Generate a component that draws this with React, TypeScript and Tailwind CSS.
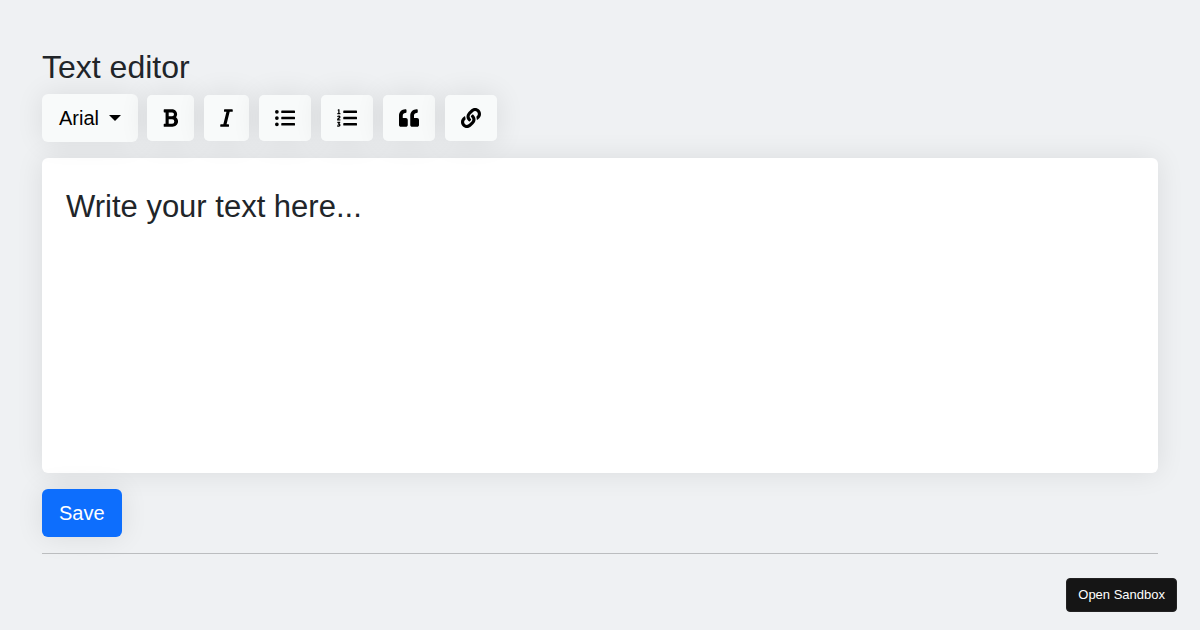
import type { ReactNode } from "react";
import { FaBold, FaItalic, FaLink, FaListOl, FaListUl, FaQuoteLeft } from "react-icons/fa";

interface ToolButtonProps {
  label: string;
  children: ReactNode;
}

function ToolButton({ label, children }: ToolButtonProps) {
  return (
    <button
      type="button"
      aria-label={label}
      className="flex h-12 items-center rounded-md border border-transparent bg-[#f8fafa] bg-clip-padding px-4 text-black shadow-[0_0_28px_rgba(0,0,0,0.09)]"
    >
      {children}
    </button>
  );
}

export default function App() {
  return (
    <div className="min-h-screen bg-[#eff1f3] px-[42px] pt-12 font-['Liberation_Sans',Arial,sans-serif] text-[#212529]">
      <main>
        <h2 id="editor-title" className="mb-2 text-[32px] leading-[38px]">
          Text editor
        </h2>
        <div className="mb-4 flex flex-wrap gap-2">
          <button
            type="button"
            aria-haspopup="menu"
            className="flex h-12 items-center gap-[10px] rounded-md bg-[#f8fafa] px-[17px] text-xl text-black shadow-[0_0_28px_rgba(0,0,0,0.09)]"
          >
            Arial
            <svg viewBox="0 0 12 6" className="h-[6px] w-3" aria-hidden="true">
              <path d="M0 0h12L6 6z" fill="currentColor" />
            </svg>
          </button>
          <ToolButton label="Bold">
            <FaBold className="h-5 w-[15px]" />
          </ToolButton>
          <ToolButton label="Italic">
            <FaItalic className="h-5 w-[13px]" />
          </ToolButton>
          <ToolButton label="Bulleted list">
            <FaListUl className="h-5 w-5" />
          </ToolButton>
          <ToolButton label="Numbered list">
            <FaListOl className="h-5 w-5" />
          </ToolButton>
          <ToolButton label="Quote">
            <FaQuoteLeft className="h-5 w-5" />
          </ToolButton>
          <ToolButton label="Link">
            <FaLink className="h-5 w-5" />
          </ToolButton>
        </div>
        <textarea
          aria-labelledby="editor-title"
          defaultValue="Write your text here..."
          className="mb-4 block h-[315px] w-full resize-none rounded-md bg-white p-6 text-[31px] leading-[50px] shadow-[0_0_28px_rgba(0,0,0,0.09)] outline-none"
        />
        <button
          type="button"
          className="block h-12 rounded-md bg-[#0d6efd] px-[17px] text-xl text-white shadow-[0_0_28px_rgba(0,0,0,0.09)]"
        >
          Save
        </button>
        <hr className="mt-4 border-[#bbbdbf]" />
      </main>
      <a
        href="#sandbox"
        className="fixed right-[23px] bottom-[18px] flex h-[34px] items-center rounded border border-[#222] bg-[#151515] px-[11px] text-[13px] text-white"
      >
        Open Sandbox
      </a>
    </div>
  );
}
